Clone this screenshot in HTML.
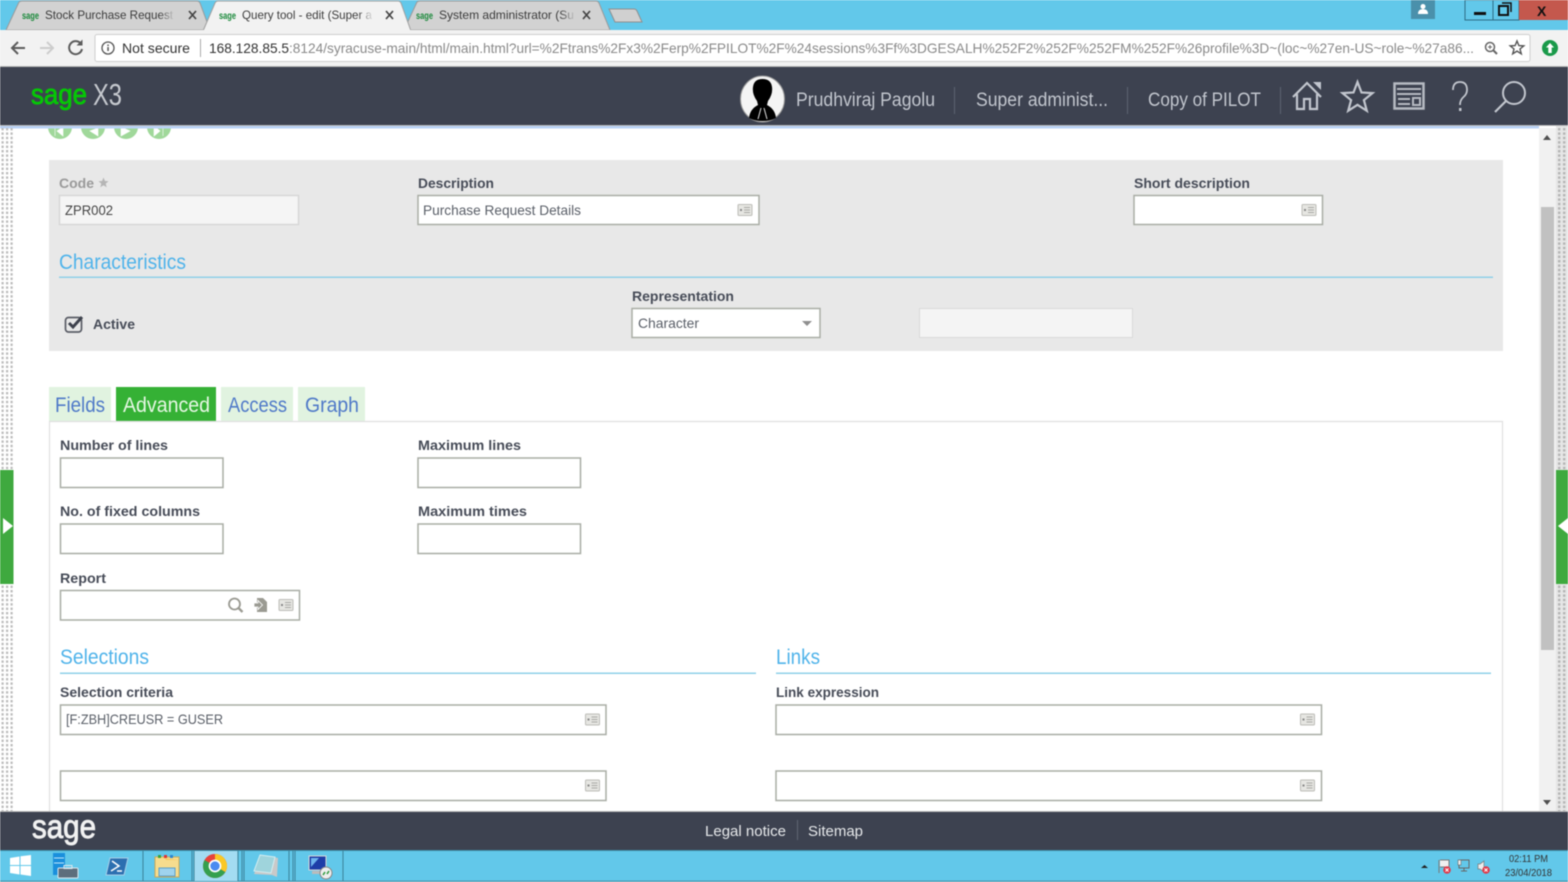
<!DOCTYPE html>
<html lang="en"><head><meta charset="utf-8"><title>Query tool - edit</title>
<style>
html,body{margin:0;padding:0;background:#fff;width:1568px;height:882px;overflow:hidden}
svg{display:block;filter:blur(.45px)}
text{font-family:"Liberation Sans",sans-serif}
.l{font-weight:bold;font-size:14px;fill:#474c58}
.v{font-size:14px;fill:#5a5f68}
.s{font-size:21px;fill:#4fb3ea}
.t{font-size:21px;fill:#4f79c8}
.u{font-size:19px;fill:#c2c6ce}
.b{font-size:12px;fill:#3c3c3c}
.i{fill:#fff;stroke:#a9ada5;stroke-width:1.5}
</style></head><body>
<svg width="1568" height="882" viewBox="0 0 1568 882" xmlns="http://www.w3.org/2000/svg">
<defs>
<pattern id="d1" width="4.500" height="4.400" patternUnits="userSpaceOnUse" x="1.500" y="128"><rect width="2.200" height="2.400" fill="#bcbcbc"/></pattern>
<pattern id="d2" width="5" height="4.400" patternUnits="userSpaceOnUse" x="1558" y="128"><rect width="2.400" height="2.400" fill="#b4b4b4"/></pattern>
<linearGradient id="f1"><stop offset="0" stop-color="#d2d2d2" stop-opacity="0"/><stop offset="1" stop-color="#d2d2d2"/></linearGradient>
<linearGradient id="f2"><stop offset="0" stop-color="#f2f2f2" stop-opacity="0"/><stop offset="1" stop-color="#f2f2f2"/></linearGradient>
<g id="ic"><rect x="0" y="0" width="14" height="11" rx="1" fill="#e6e6e2" stroke="#bdbdb8"/><rect x="2" y="4.500" width="2" height="2" fill="#888"/><path d="M6 3h6M6 5.500h6M6 8h6" stroke="#a8a8a4" stroke-width="1"/></g>
</defs>
<rect width="1568" height="882" fill="#fff"/>

<!-- browser tab strip -->
<rect width="1568" height="31" fill="#62c8ea"/>
<path d="M6 30L19 2Q20 1 22 1H197Q199 1 200 3L210 30Z" fill="#d2d2d2" stroke="#9a9a9a"/>
<path d="M404 30L417 2Q418 1 420 1H596Q598 1 599 3L610 30Z" fill="#d2d2d2" stroke="#9a9a9a"/>
<path d="M609 9H634Q636 9 637 11L642 22H615Z" fill="#d0d0d0" stroke="#8f8f8f"/>
<path d="M203 31L215 3Q216 1 218 1H398Q400 1 401 3L411 31Z" fill="#f2f2f2" stroke="#a0a0a0"/>
<rect y="30" width="1568" height="37" fill="#f2f2f2"/>
<rect x="207" y="29" width="202" height="3" fill="#f2f2f2"/>
<text x="22" y="19" font-size="10" font-weight="bold" fill="#1c8a3c" textLength="17" lengthAdjust="spacingAndGlyphs">sage</text>
<text x="219" y="19" font-size="10" font-weight="bold" fill="#1c8a3c" textLength="17" lengthAdjust="spacingAndGlyphs">sage</text>
<text x="416" y="19" font-size="10" font-weight="bold" fill="#1c8a3c" textLength="17" lengthAdjust="spacingAndGlyphs">sage</text>
<text class="b" x="45" y="19" textLength="128" lengthAdjust="spacingAndGlyphs">Stock Purchase Request</text>
<text class="b" x="242" y="19" textLength="130" lengthAdjust="spacingAndGlyphs">Query tool - edit (Super a</text>
<text class="b" x="439" y="19" textLength="135" lengthAdjust="spacingAndGlyphs">System administrator (Su</text>
<rect x="160" y="8" width="15" height="14" fill="url(#f1)"/>
<rect x="358" y="8" width="16" height="14" fill="url(#f2)"/>
<rect x="560" y="8" width="16" height="14" fill="url(#f1)"/>
<path d="M189 11l7 8M196 11l-7 8M386 11l7 8M393 11l-7 8M583 11l7 8M590 11l-7 8" stroke="#444" stroke-width="1.700" fill="none"/>

<!-- window controls -->
<rect x="1411" y="0" width="24" height="19" fill="#4a90ab"/>
<circle cx="1423" cy="6.500" r="2.500" fill="#fff"/><path d="M1418 14q0-5 5-5t5 5z" fill="#fff"/>
<rect x="1465" y="0" width="28" height="20" fill="#62c8ea" stroke="#2e6d85"/>
<rect x="1493" y="0" width="26" height="20" fill="#62c8ea" stroke="#2e6d85"/>
<rect x="1519" y="0" width="49" height="20" fill="#c4584d"/>
<rect x="1474" y="12" width="12" height="3" fill="#111"/>
<rect x="1499" y="6" width="9" height="9" fill="none" stroke="#111" stroke-width="2"/><path d="M1502 3h9v9" fill="none" stroke="#111" stroke-width="1.500"/>
<text x="1537" y="16" font-size="14" font-weight="bold" fill="#111">X</text>

<!-- toolbar -->
<path d="M25 48H12M18 42l-6 6 6 6" fill="none" stroke="#5c5c5c" stroke-width="2"/>
<path d="M40 48H53M47 42l6 6-6 6" fill="none" stroke="#cdcdcd" stroke-width="2"/>
<path d="M81 44a6.500 6.500 0 1 0 1 5" fill="none" stroke="#5c5c5c" stroke-width="2"/><path d="M82.500 39.500v6h-6z" fill="#5c5c5c"/>
<rect x="95" y="34.500" width="1435" height="27" rx="2" fill="#fff" stroke="#cfcfcf"/>
<circle cx="108" cy="48" r="6" fill="none" stroke="#555" stroke-width="1.300"/><rect x="107.300" y="47" width="1.500" height="4" fill="#555"/><rect x="107.300" y="44.500" width="1.500" height="1.500" fill="#555"/>
<text x="122" y="53" font-size="14" fill="#333" textLength="68" lengthAdjust="spacingAndGlyphs">Not secure</text>
<rect x="200" y="39" width="1" height="18" fill="#aaa"/>
<text x="209" y="53" font-size="14" fill="#333" textLength="80" lengthAdjust="spacingAndGlyphs">168.128.85.5</text>
<text x="289" y="53" font-size="14" fill="#8a8a8a" textLength="1185" lengthAdjust="spacingAndGlyphs">:8124/syracuse-main/html/main.html?url=%2Ftrans%2Fx3%2Ferp%2FPILOT%2F%24sessions%3Ff%3DGESALH%252F2%252F%252FM%252F%26profile%3D~(loc~%27en-US~role~%27a86...</text>
<circle cx="1490" cy="47" r="4.500" fill="none" stroke="#666" stroke-width="1.500"/><path d="M1493.500 50.500l3.500 3.500" stroke="#666" stroke-width="2"/><path d="M1488 47h4M1490 45v4" stroke="#666"/>
<path d="M1517 41l1.900 4.600 4.900.3-3.800 3.100 1.300 4.800-4.300-2.700-4.300 2.700 1.300-4.800-3.800-3.100 4.900-.3z" fill="none" stroke="#555" stroke-width="1.400"/>
<circle cx="1550" cy="48" r="8" fill="#1a9a4a"/><path d="M1550 43l4 4.500h-2.300V53h-3.400v-5.500H1546z" fill="#fff"/>

<!-- nav circles, clipped by the header -->
<circle cx="60" cy="127" r="12" fill="#a0d89a"/><circle cx="93" cy="127" r="12" fill="#a0d89a"/><circle cx="126" cy="127" r="12" fill="#a0d89a"/><circle cx="159" cy="127" r="12" fill="#a0d89a"/>
<path d="M55 128v8M57 131l6 5v-9zM98 128l-8 3 8 5zM121 136l9-5-9-4zM154 136l6-5-6-5zM163 127v9" fill="#fff" stroke="#fff" stroke-width=".6"/>

<!-- sage header -->
<rect y="66" width="1568" height="1" fill="#b5b5b5"/>
<rect y="67" width="1568" height="58" fill="#3d4250"/>
<rect y="125" width="1568" height="1" fill="#b8b8b8"/>
<rect y="126" width="1539" height="2.500" fill="#b9d2f6"/>
<text x="31" y="104" font-size="29" fill="#05c805" stroke="#05c805" stroke-width=".8" textLength="56" lengthAdjust="spacingAndGlyphs">sage</text>
<text x="93" y="105" font-size="31" fill="#c5c8ce" textLength="29" lengthAdjust="spacingAndGlyphs">X3</text>
<ellipse cx="762.500" cy="99" rx="22" ry="23" fill="#f4f4f4" stroke="#999"/>
<path d="M749 118q1-9 9-13l-1-4q-5-7-4-14 1-8 9.500-8t9.500 8q1 7-4 14l-1 4q8 4 9 13-6 3-13.500 3t-13.500-3z" fill="#000"/>
<path d="M761 108l-3 11M764 108l3 11" stroke="#ddd" stroke-width="1"/>
<text class="u" x="796" y="106" textLength="139" lengthAdjust="spacingAndGlyphs">Prudhviraj Pagolu</text>
<rect x="954" y="87" width="1" height="27" fill="#5c6270"/>
<text class="u" x="976" y="106" textLength="132" lengthAdjust="spacingAndGlyphs">Super administ...</text>
<rect x="1127" y="87" width="1" height="27" fill="#5c6270"/>
<text class="u" x="1148" y="106" textLength="113" lengthAdjust="spacingAndGlyphs">Copy of PILOT</text>
<rect x="1280" y="87" width="1" height="27" fill="#5c6270"/>
<!-- home -->
<path d="M1293 97L1307 83L1321 97M1297 94V109H1304V99H1310V109H1317V94" fill="none" stroke="#c2c6ce" stroke-width="2.200"/>
<path d="M1313 82H1321V90Z" fill="#c2c6ce"/>
<!-- star -->
<path d="M1357.500 82l4 10.500 11 .6-8.600 7 2.900 10.700-9.300-6-9.300 6 2.900-10.700-8.600-7 11-.6z" fill="none" stroke="#c2c6ce" stroke-width="2.200"/>
<!-- news -->
<rect x="1394.500" y="83.500" width="29" height="25" fill="none" stroke="#b6bac2" stroke-width="2.500"/>
<path d="M1397 89h24M1397 94h24" stroke="#b6bac2" stroke-width="2"/>
<path d="M1398 99h12M1398 104h12" stroke="#b6bac2" stroke-width="2"/>
<rect x="1413" y="98" width="7" height="7" fill="none" stroke="#b6bac2" stroke-width="2"/>
<!-- help -->
<path d="M1453 90q0-8 7-8t7 8q0 4-3.500 7t-3.500 8" fill="none" stroke="#c2c6ce" stroke-width="1.800"/><rect x="1459" y="108" width="2.500" height="3" fill="#c2c6ce"/>
<!-- search -->
<circle cx="1514" cy="93" r="11" fill="none" stroke="#c2c6ce" stroke-width="2"/><path d="M1506 101L1495 112" stroke="#c2c6ce" stroke-width="2.200"/>

<!-- content area -->
<rect x="1" y="128" width="13" height="683" fill="url(#d1)"/>

<!-- top panel -->
<rect x="49" y="160" width="1454" height="191" fill="#e8e8e8"/>
<text class="l" x="59" y="188" style="fill:#9a9a9a" textLength="35" lengthAdjust="spacingAndGlyphs">Code</text>
<path d="M103.500 177.500l1.400 3.500 3.600.2-2.800 2.400 1 3.600-3.200-2-3.200 2 1-3.600-2.800-2.400 3.600-.2z" fill="#b5b5b5"/>
<rect x="59.500" y="195.500" width="239" height="29" fill="#f5f5f5" stroke="#d6d6d6" stroke-width="1.400"/>
<text class="v" x="65" y="215" style="fill:#444" textLength="48" lengthAdjust="spacingAndGlyphs">ZPR002</text>
<text class="l" x="418" y="188" textLength="76" lengthAdjust="spacingAndGlyphs">Description</text>
<rect class="i" x="418" y="195.500" width="341" height="29"/>
<text class="v" x="423" y="215" textLength="158" lengthAdjust="spacingAndGlyphs">Purchase Request Details</text>
<use href="#ic" x="738" y="204.500"/>
<text class="l" x="1134" y="188" textLength="116" lengthAdjust="spacingAndGlyphs">Short description</text>
<rect class="i" x="1134" y="195.500" width="188.500" height="29"/>
<use href="#ic" x="1302" y="204.500"/>
<text class="s" x="59" y="269" textLength="127" lengthAdjust="spacingAndGlyphs">Characteristics</text>
<rect x="59" y="276.500" width="1434" height="1.500" fill="#8fd0e8"/>
<rect x="65.500" y="317.500" width="16" height="14.500" rx="3" fill="none" stroke="#5a5d66" stroke-width="1.700"/>
<path d="M69 323l4 4 9-10" fill="none" stroke="#3e424d" stroke-width="3"/>
<text class="l" x="93" y="329" textLength="42" lengthAdjust="spacingAndGlyphs">Active</text>
<text class="l" x="632" y="301" textLength="102" lengthAdjust="spacingAndGlyphs">Representation</text>
<rect class="i" x="632" y="308.500" width="188" height="29"/>
<text class="v" x="638" y="328" textLength="61" lengthAdjust="spacingAndGlyphs">Character</text>
<path d="M802 321h10l-5 5z" fill="#8f8f8f"/>
<rect x="919.500" y="308.500" width="213" height="29" fill="#f4f4f4" stroke="#dadada"/>

<!-- tabs -->
<rect x="49" y="387" width="62" height="34" fill="#e1f3e0"/>
<rect x="116" y="387" width="100" height="34" fill="#35b135"/>
<rect x="221" y="387" width="72" height="34" fill="#e1f3e0"/>
<rect x="298" y="387" width="67" height="34" fill="#e1f3e0"/>
<text class="t" x="55" y="412" textLength="50" lengthAdjust="spacingAndGlyphs">Fields</text>
<text class="t" x="123" y="412" style="fill:#e6f7e4" textLength="87" lengthAdjust="spacingAndGlyphs">Advanced</text>
<text class="t" x="228" y="412" textLength="59" lengthAdjust="spacingAndGlyphs">Access</text>
<text class="t" x="305" y="412" textLength="54" lengthAdjust="spacingAndGlyphs">Graph</text>
<path d="M49.500 811V421.500H1502.500V811" fill="none" stroke="#e0e0e0" stroke-width="1.200"/>

<!-- advanced form -->
<text class="l" x="60" y="450" textLength="108" lengthAdjust="spacingAndGlyphs">Number of lines</text>
<rect class="i" x="60.500" y="458" width="162.500" height="29.500"/>
<text class="l" x="418" y="450" textLength="103" lengthAdjust="spacingAndGlyphs">Maximum lines</text>
<rect class="i" x="418" y="458" width="162.500" height="29.500"/>
<text class="l" x="60" y="516" textLength="140" lengthAdjust="spacingAndGlyphs">No. of fixed columns</text>
<rect class="i" x="60.500" y="524" width="162.500" height="29.500"/>
<text class="l" x="418" y="516" textLength="109" lengthAdjust="spacingAndGlyphs">Maximum times</text>
<rect class="i" x="418" y="524" width="162.500" height="29.500"/>
<text class="l" x="60" y="583" textLength="46" lengthAdjust="spacingAndGlyphs">Report</text>
<rect class="i" x="60.500" y="590.500" width="239" height="29.500"/>
<circle cx="234.500" cy="604" r="5.500" fill="none" stroke="#9a9a92" stroke-width="1.800"/><path d="M238.500 608l4 4" stroke="#9a9a92" stroke-width="2.300"/>
<path d="M257 598h6l4 4v10h-10z" fill="#9a9a92"/>
<path d="M254 603h4v-2.500l4.500 4.500-4.500 4.500V607h-4z" fill="#9a9a92" stroke="#fff" stroke-width=".8"/>
<use href="#ic" x="279" y="599.500"/>

<text class="s" x="60" y="664" textLength="89" lengthAdjust="spacingAndGlyphs">Selections</text>
<rect x="60" y="672.500" width="696" height="1.500" fill="#8fd0e8"/>
<text class="s" x="776" y="664" textLength="44" lengthAdjust="spacingAndGlyphs">Links</text>
<rect x="776" y="672.500" width="715" height="1.500" fill="#8fd0e8"/>
<text class="l" x="60" y="697" textLength="113" lengthAdjust="spacingAndGlyphs">Selection criteria</text>
<rect class="i" x="60.500" y="705" width="545.500" height="29.500"/>
<text class="v" x="66" y="724" textLength="157" lengthAdjust="spacingAndGlyphs">[F:ZBH]CREUSR = GUSER</text>
<use href="#ic" x="585.500" y="714"/>
<rect class="i" x="60.500" y="771" width="545.500" height="29.500"/>
<use href="#ic" x="585.500" y="780"/>
<text class="l" x="776" y="697" textLength="103" lengthAdjust="spacingAndGlyphs">Link expression</text>
<rect class="i" x="776" y="705" width="545.500" height="29.500"/>
<use href="#ic" x="1300.500" y="714"/>
<rect class="i" x="776" y="771" width="545.500" height="29.500"/>
<use href="#ic" x="1300.500" y="780"/>

<!-- scrollbar and side strips -->
<rect x="1539" y="128" width="17" height="683" fill="#f1f1f1"/>
<rect x="1541" y="207" width="13" height="443" fill="#c1c1c1"/>
<path d="M1543 140h8l-4-5z" fill="#505050"/>
<path d="M1543 800h8l-4 5z" fill="#505050"/>
<rect x="1556" y="126" width="12" height="685" fill="#e6e6e6"/>
<rect x="1556" y="126" width="12" height="685" fill="url(#d2)"/>
<rect x="0" y="470" width="13.500" height="114" fill="#3fa93f"/>
<path d="M3 518L13 526L3 534Z" fill="#fff"/>
<rect x="1556" y="470" width="12" height="114" fill="#3fa93f"/>
<path d="M1568 518L1558 526L1568 534Z" fill="#fff"/>

<!-- footer -->
<rect y="811" width="1568" height="1" fill="#b8b8b8"/>
<rect y="812" width="1568" height="38" fill="#3d4250"/>
<text x="32" y="838" font-size="33" fill="#f1f1f1" stroke="#f1f1f1" stroke-width=".9" textLength="64" lengthAdjust="spacingAndGlyphs">sage</text>
<text x="705" y="836" font-size="15" fill="#e6e8ea" textLength="81" lengthAdjust="spacingAndGlyphs">Legal notice</text>
<rect x="797" y="820" width="1" height="20" fill="#5f6572"/>
<text x="808" y="836" font-size="15" fill="#e6e8ea" textLength="55" lengthAdjust="spacingAndGlyphs">Sitemap</text>

<!-- taskbar -->
<rect y="850" width="1568" height="32" fill="#62c8ea"/>
<rect y="850" width="1568" height="1" fill="#3f8fa8"/>
<rect y="880.500" width="1568" height="1.500" fill="#4a9ab3"/>
<rect x="194" y="851" width="44" height="30" fill="#a3dcf2"/>
<path d="M143 851v30M192 851v30M194 851v30M238 851v30M242 851v30M244 851v30M289 851v30M293 851v30M295 851v30M343 851v30" stroke="#3a8199" stroke-width="1"/>
<path d="M10 858l9.500-1.500v8.500H10zM20.500 856.300L31 855v10H20.500zM10 866h9.500v8.500L10 873zM20.500 866H31v10l-10.500-1.500z" fill="#fff"/>
<rect x="53" y="853" width="12" height="22" fill="#1a8fdc"/><path d="M54 858h10M54 863h10" stroke="#bfe6fa" stroke-width="1"/>
<rect x="58" y="868" width="20" height="10" rx="1" fill="#5d6e7d" stroke="#dfe8ee"/><rect x="64" y="865.500" width="8" height="3" fill="none" stroke="#dfe8ee"/>
<path d="M110 858h18l-4 17h-18z" fill="#2c6fb0" stroke="#a7cfe8"/><path d="M112 861l7 5-8 5M117 871h5" fill="none" stroke="#fff" stroke-width="1.500"/>
<path d="M155 857h24v20h-24z" fill="#f6dc8e" stroke="#c9a85a"/><path d="M155 857h9l2 3h13" fill="#f2c862"/><rect x="159" y="868" width="16" height="8" fill="#9fd3ee" stroke="#5e9fc7"/>
<path d="M158 855h3v3h-3z" fill="#3aa43a"/><path d="M164 855h3v3h-3z" fill="#d33"/><path d="M170 855h3v3h-3z" fill="#2c86d1"/>
<circle cx="215" cy="866" r="12" fill="#e8423a"/>
<path d="M215 866L225.400 872A12 12 0 0 1 209 876.400z" fill="#34a04e"/>
<path d="M215 854A12 12 0 0 1 225.400 872L215 866 215 854z" fill="#f9c825"/>
<path d="M209 876.400A12 12 0 0 1 204.600 860L215 866z" fill="#34a04e"/>
<path d="M215 854A12 12 0 0 0 204.600 860L215 866V854z" fill="#e8423a"/>
<circle cx="215" cy="866" r="5.500" fill="#4a8bf0" stroke="#fff" stroke-width="1.700"/>
<path d="M262 855l16 3-1 19-5-2-18-1z" fill="#c9c9c9"/>
<path d="M260 855l15 2-4 16-17-2z" fill="#9fd4dc" stroke="#d4eef2"/>
<rect x="309" y="856" width="17" height="14" fill="#1e3da8" stroke="#d8d8d8"/><path d="M311 858l8 0-8 9z" fill="#6fb4ee"/><rect x="312" y="871" width="10" height="3" fill="#bbb"/>
<circle cx="326" cy="873" r="6" fill="#eee" stroke="#888"/><path d="M323 875l2-3M329 871l-2 3" stroke="#2a9a3a" stroke-width="1.500"/>
<path d="M1421 868h7l-3.500-3z" fill="#222"/>
<path d="M1439 860v13M1440 860h9v7h-9" fill="#f0f0f0" stroke="#777"/><circle cx="1447" cy="870" r="3.800" fill="#e0394a"/><path d="M1445.500 868.500l3 3m0-3l-3 3" stroke="#fff"/>
<rect x="1459" y="860" width="10" height="8" fill="#62c8ea" stroke="#666"/><rect x="1458" y="860" width="3" height="5" fill="#eee" stroke="#666" stroke-width=".6"/><path d="M1464 868v3h-3h6" fill="none" stroke="#666"/>
<path d="M1478 864h2l4-3v11l-4-3h-2z" fill="#ececec" stroke="#777" stroke-width=".7"/><circle cx="1486" cy="870" r="3.800" fill="#e0394a"/><path d="M1484.500 868.500l3 3m0-3l-3 3" stroke="#fff"/>
<text x="1509" y="862" font-size="10.500" fill="#333" textLength="39" lengthAdjust="spacingAndGlyphs">02:11 PM</text>
<text x="1505" y="876" font-size="10.500" fill="#333" textLength="47" lengthAdjust="spacingAndGlyphs">23/04/2018</text>
</svg>
</body></html>
